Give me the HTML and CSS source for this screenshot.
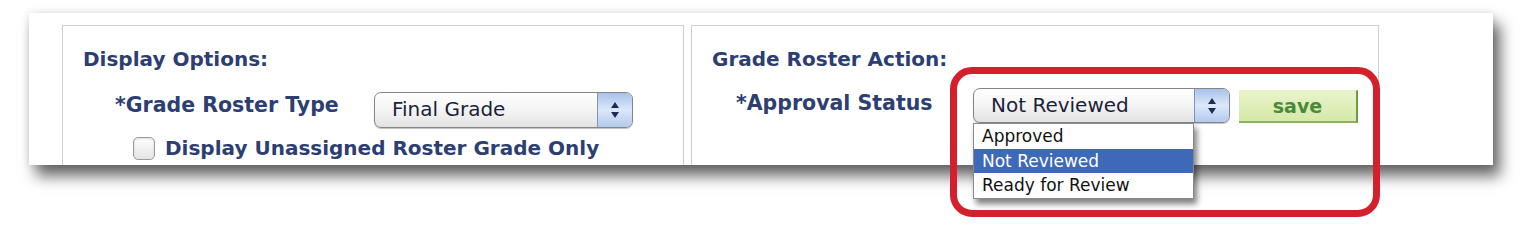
FILE: index.html
```html
<!DOCTYPE html>
<html lang="en">
<head>
    <meta charset="UTF-8">
    <title>Grade Roster</title>
    <link rel="stylesheet" href="styles.css">
</head>
<body>

    <div class="sheet">

        <div class="panel panel-left">
            <h2>Display Options:</h2>
            <div class="row row-type">
                <span class="label">*Grade Roster Type</span>
                <div class="select select-type">
                    <span class="select-text">Final Grade</span>
                    <span class="arrows">
                        <svg width="10" height="18" viewBox="0 0 10 18"><path d="M5 1 L9 7 L1 7 Z M1 11 L9 11 L5 17 Z" fill="#1d2d55"/></svg>
                    </span>
                </div>
            </div>
            <div class="check-row">
                <span class="checkbox"></span>
                <span class="check-label">Display Unassigned Roster Grade Only</span>
            </div>
        </div>

        <div class="panel panel-right">
            <h2>Grade Roster Action:</h2>
            <div class="row row-status">
                <span class="label">*Approval Status</span>
                <div class="select-wrap">
                    <div class="select select-status">
                        <span class="select-text">Not Reviewed</span>
                        <span class="arrows">
                            <svg width="10" height="18" viewBox="0 0 10 18"><path d="M5 1 L9 7 L1 7 Z M1 11 L9 11 L5 17 Z" fill="#1d2d55"/></svg>
                        </span>
                    </div>
                    <ul class="dropdown">
                        <li>Approved</li>
                        <li class="selected">Not Reviewed</li>
                        <li>Ready for Review</li>
                    </ul>
                </div>
                <button class="save-btn">save</button>
            </div>
        </div>

        <div class="callout"></div>
    </div>

</body>
</html>
```

FILE: styles.css
```css
*{
    margin: 0;
    padding: 0;
    box-sizing: border-box;
}

html, body{
    min-height: 236px;
}

body{
    background-color: #fff;
    font-family: "DejaVu Sans", Verdana, sans-serif;
    padding: 13px 0 0 29px;
}

.sheet{
    position: relative;
    width: 1464px;
    height: 152px;
    background-color: #fff;
    padding: 12px 0 0 33px;
    display: flex;
    gap: 7px;
    box-shadow: 7px 11px 14px rgba(0, 0, 0, 0.6), 0 0 8px rgba(0, 0, 0, 0.12);
}

.panel{
    height: 140px;
    border: 1px solid #cfcfcf;
    border-bottom: none;
    padding: 22px 0 0 20px;
}

.panel-left{
    width: 622px;
    overflow: hidden;
}

.panel-right{
    width: 688px;
}

h2{
    font-size: 20px;
    line-height: 23px;
    font-weight: bold;
    color: #2d3e72;
}

.row{
    display: flex;
    align-items: flex-start;
}

.label{
    flex: none;
    font-size: 20.5px;
    line-height: 23px;
    font-weight: bold;
    color: #2d3e72;
    padding-top: 2px;
}

.row-type{
    margin-top: 21px;
    padding-left: 32px;
}

.row-type .label{
    width: 259px;
}

.row-status{
    margin-top: 17px;
    padding-left: 24px;
}

.row-status .label{
    width: 237px;
    padding-top: 4px;
}

.select{
    display: flex;
    align-items: stretch;
    border: 1px solid #868686;
    border-radius: 7px;
    background: linear-gradient(#ffffff, #f4f4f4 50%, #e3e3e3);
    box-shadow: 0 1px 1px rgba(0, 0, 0, 0.25);
    overflow: hidden;
}

.select-type{
    width: 259px;
    height: 36px;
}

.select-status{
    width: 257px;
    height: 35px;
}

.select-text{
    flex: 1;
    font-size: 20px;
    line-height: 33px;
    color: #1c1f3a;
    padding-left: 17px;
}

.arrows{
    width: 35px;
    display: flex;
    align-items: center;
    justify-content: center;
    border-left: 1px solid #8094ba;
    background: linear-gradient(#a8c2ea, #dce8f9 50%, #b1caee);
}

.check-row{
    display: flex;
    align-items: center;
    gap: 10px;
    margin-top: 9px;
    padding-left: 50px;
}

.checkbox{
    width: 22px;
    height: 23px;
    border: 1px solid #9c9c9c;
    border-radius: 5px;
    background: linear-gradient(#ffffff, #e4e4e4);
    box-shadow: inset 0 1px 2px rgba(0, 0, 0, 0.15);
}

.check-label{
    font-size: 20px;
    line-height: 23px;
    font-weight: bold;
    color: #2d3e72;
}

.select-wrap{
    position: relative;
}

.dropdown{
    position: absolute;
    top: 100%;
    left: 0;
    width: 221px;
    list-style: none;
    background-color: #fff;
    border: 1px solid #8a8a8a;
    box-shadow: 3px 5px 6px rgba(0, 0, 0, 0.5);
    z-index: 2;
}

.dropdown li{
    font-size: 17px;
    line-height: 24.5px;
    color: #111;
    padding-left: 8px;
}

.dropdown .selected{
    background-color: #3d69b8;
    color: #fff;
}

.save-btn{
    width: 119px;
    height: 33px;
    margin: 2px 0 0 9px;
    font-family: "DejaVu Sans", Verdana, sans-serif;
    font-size: 19px;
    font-weight: bold;
    color: #4a8a3a;
    background: linear-gradient(#e8f3cb, #d5e9a8);
    border: none;
    border-top: 1px solid #e3efc4;
    border-right: 2px solid #6b9c43;
    border-bottom: 2px solid #8cb460;
}

.callout{
    position: absolute;
    left: 921px;
    top: 54px;
    width: 430px;
    height: 150px;
    border: 7px solid #d41f2c;
    border-radius: 22px;
    z-index: 3;
}
```
